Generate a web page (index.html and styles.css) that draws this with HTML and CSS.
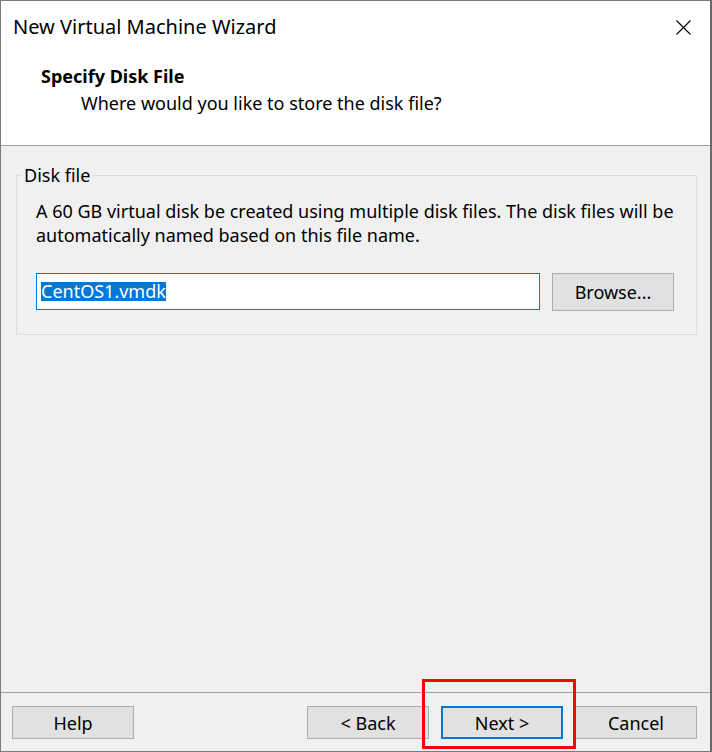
FILE: index.html
```html
<!DOCTYPE html>
<html>
<head>
<meta charset="utf-8">
<link rel="stylesheet" href="styles.css">
</head>
<body>
<div class="window">
  <div class="header">
    <div class="titlebar">
      <span class="title">New Virtual Machine Wizard</span>
      <svg class="close" width="15" height="15" viewBox="0 0 15 15"><path d="M0.5 0.5 L14.5 14.5 M14.5 0.5 L0.5 14.5" stroke="#000" stroke-width="1.1" fill="none"/></svg>
    </div>
    <div class="heading">Specify Disk File</div>
    <div class="subheading">Where would you like to store the disk file?</div>
  </div>
  <div class="content">
    <fieldset class="group">
      <legend class="legend">Disk file</legend>
      <p class="desc">A 60 GB virtual disk be created using multiple disk files. The disk files will be automatically named based on this file name.</p>
      <div class="filerow">
        <div class="input"><span class="sel">CentOS1.vmdk</span></div>
        <button class="btn browse">Browse...</button>
      </div>
    </fieldset>
  </div>
  <div class="footer">
    <button class="btn">Help</button>
    <div class="spacer"></div>
    <button class="btn">&lt; Back</button>
    <button class="btn default">Next &gt;</button>
    <button class="btn">Cancel</button>
  </div>
  <div class="highlight"></div>
</div>
</body>
</html>
```
FILE: styles.css
```css
html, body {
  margin: 0;
  padding: 0;
  background: #ffffff;
}
body {
  font-family: "Noto Sans", "Open Sans", sans-serif;
  font-size: 18px;
  color: #000;
}
.window {
  position: relative;
  width: 712px;
  height: 752px;
  box-sizing: border-box;
  border: 1px solid #7a7a7a;
  border-right: 2px solid #6a6a6a;
  display: flex;
  flex-direction: column;
  overflow: hidden;
}
.header {
  height: 132px;
  padding-top: 12px;
  background: #fff;
  border-bottom: 1px solid #a0a0a0;
  flex: none;
}
.titlebar {
  display: flex;
  align-items: center;
  justify-content: space-between;
  padding-left: 12px;
  padding-right: 19px;
  height: 28px;
}
.title {
  font-size: 20px;
  line-height: 28px;
}
.close {
  display: block;
}
.heading {
  margin-top: 23px;
  padding-left: 40px;
  font-weight: bold;
  line-height: 24px;
}
.subheading {
  margin-top: 3px;
  padding-left: 80px;
  line-height: 24px;
}
.content {
  flex: 1;
  background: #f0f0f0;
  padding: 17px 13px 0 15px;
}
.group {
  margin: 0;
  border: 1px solid #dcdcdc;
  padding: 12px 22px 23px 19px;
}
.legend {
  padding: 0 2px;
  margin-left: -14px;
  line-height: 24px;
}
.desc {
  margin: 0;
  line-height: 24px;
}
.filerow {
  display: flex;
  gap: 12px;
  margin-top: 26px;
}
.input {
  flex: 1;
  height: 35px;
  border: 1px solid #0078d7;
  background: #fff;
  padding-left: 4px;
  display: flex;
  align-items: center;
}
.sel {
  background: #0078d7;
  color: #fff;
  line-height: 19px;
}
.btn {
  font-family: "Noto Sans", "Open Sans", sans-serif;
  font-size: 18px;
  color: #000;
  background: #e1e1e1;
  border: 1px solid #adadad;
  width: 122px;
  height: 33px;
  padding: 0;
  margin: 0;
  box-sizing: border-box;
}
.browse {
  height: 38px;
}
.footer {
  flex: none;
  border-top: 1px solid #a0a0a0;
  background: #f0f0f0;
  display: flex;
  align-items: flex-start;
  padding: 13px 13px 0 11px;
  box-sizing: border-box;
  height: 59px;
  gap: 12px;
}
.spacer {
  flex: 1;
}
.default {
  border: 2px solid #0078d7;
}
.highlight {
  position: absolute;
  left: 421px;
  top: 678px;
  width: 148px;
  height: 64px;
  border: 3px solid #ff0000;
}
```
